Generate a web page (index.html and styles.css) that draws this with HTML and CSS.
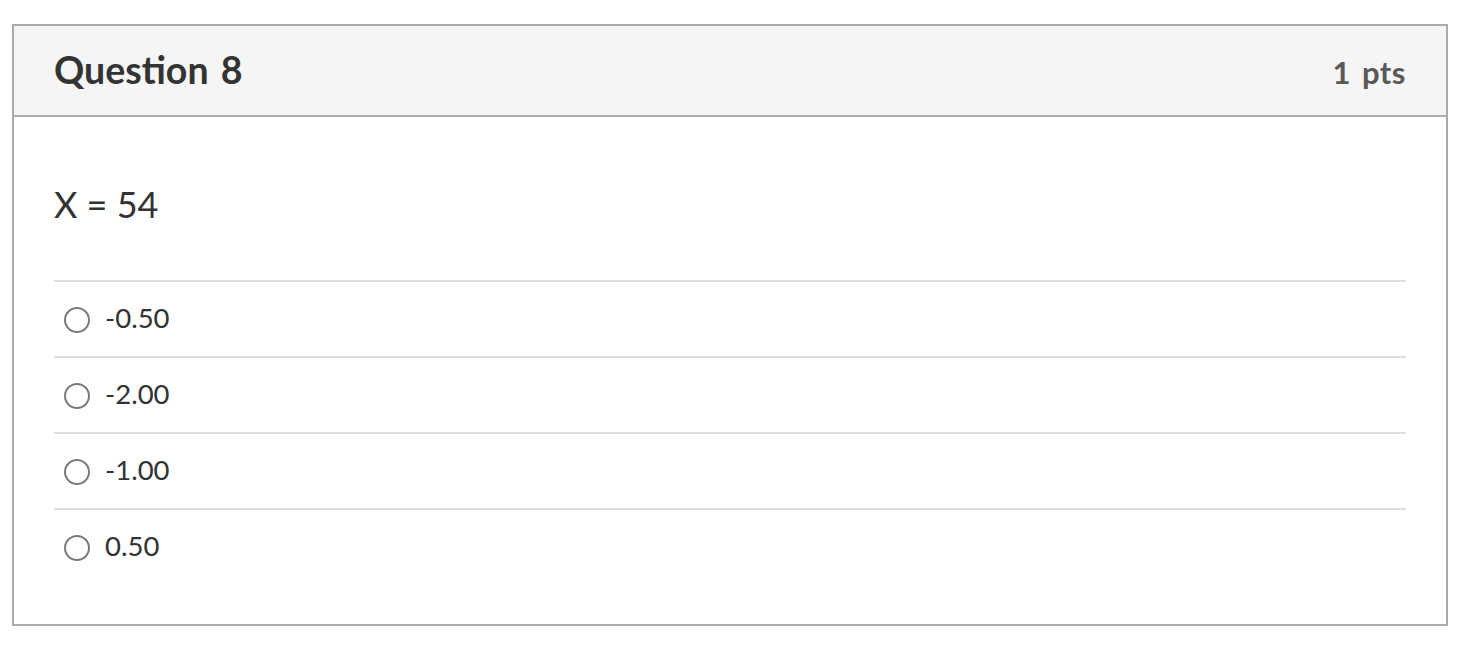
FILE: index.html
```html
<!DOCTYPE html>
<html lang="en">
<head>
<meta charset="utf-8">
<title>Question 8</title>
<link rel="stylesheet" href="styles.css">
</head>
<body>
<div class="card">
  <div class="header">
    <h2 class="title">Question 8</h2>
    <span class="pts">1 pts</span>
  </div>
  <div class="content">
    <p class="question-text">X = 54</p>
    <div class="answers">
      <label class="answer"><span class="radio"></span><span class="label">-0.50</span></label>
      <label class="answer"><span class="radio"></span><span class="label">-2.00</span></label>
      <label class="answer"><span class="radio"></span><span class="label">-1.00</span></label>
      <label class="answer"><span class="radio"></span><span class="label">0.50</span></label>
    </div>
  </div>
</div>
</body>
</html>
```
FILE: styles.css
```css
html, body {
  margin: 0;
  padding: 0;
  background: #ffffff;
}
body {
  font-family: Lato, "Open Sans", sans-serif;
  color: #333333;
}
.card {
  box-sizing: border-box;
  width: 1436px;
  margin: 24px 0 0 12px;
  border: 2px solid #aaaaaa;
}
.header {
  box-sizing: border-box;
  height: 91px;
  background: #f5f5f5;
  border-bottom: 2px solid #aaaaaa;
  display: flex;
  justify-content: space-between;
  align-items: baseline;
  padding: 21px 40px 0 40px;
}
.title {
  margin: 0;
  font-size: 37.5px;
  font-weight: 700;
  line-height: 1.2;
  word-spacing: 3px;
  color: #333333;
}
.pts {
  font-size: 31px;
  font-weight: 700;
  color: #595959;
  line-height: 1.2;
  letter-spacing: 0.5px;
  word-spacing: 3px;
}
.content {
  padding: 0 40px 40px 40px;
}
.question-text {
  margin: 66px 0 54px 0;
  font-size: 36px;
  line-height: 1.2;
  color: #333333;
}
.answers {
  display: flex;
  flex-direction: column;
}
.answer {
  box-sizing: border-box;
  height: 76px;
  border-top: 2px solid #dddddd;
  display: flex;
  align-items: center;
  padding-left: 10px;
}
.radio {
  box-sizing: border-box;
  width: 26px;
  height: 26px;
  border: 2px solid #7a7a7a;
  border-radius: 50%;
  flex: none;
  margin-right: 15px;
  margin-top: 2px;
}
.label {
  font-size: 27.5px;
  line-height: 1.2;
  color: #333333;
  margin-top: -3px;
}
```
